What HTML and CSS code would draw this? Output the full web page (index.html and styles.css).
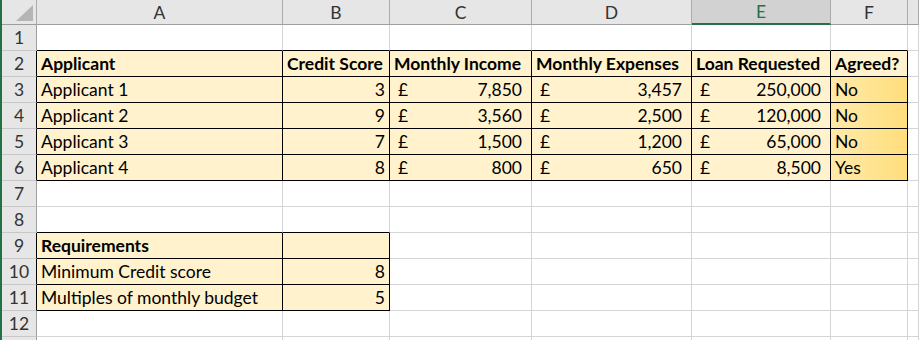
FILE: index.html
```html
<!DOCTYPE html>
<html>
<head>
<meta charset="utf-8">
<link rel="stylesheet" href="styles.css">
</head>
<body>
<div class="sheet">
  <div class="corner"><svg width="18" height="17" viewBox="0 0 18 17"><polygon points="17,0 17,16 0,16" fill="#b5b5b5"/></svg></div>
  <div class="ch">A</div><div class="ch">B</div><div class="ch">C</div><div class="ch">D</div><div class="ch sel">E</div><div class="ch">F</div><div class="ch"></div>

  <div class="rh">1</div>
  <div class="c tb"></div><div class="c tb"></div><div class="c tb"></div><div class="c tb"></div><div class="c tb"></div><div class="c tb"></div><div class="c"></div>

  <div class="rh lb">2</div>
  <div class="c b f bold">Applicant</div><div class="c b f bold">Credit Score</div><div class="c b f bold">Monthly Income</div><div class="c b f bold">Monthly Expenses</div><div class="c b f bold">Loan Requested</div><div class="c b f bold">Agreed?</div><div class="c"></div>

  <div class="rh lb">3</div>
  <div class="c b f">Applicant 1</div><div class="c b f num">3</div><div class="c b f cur"><span>£</span><span>7,850</span></div><div class="c b f cur"><span>£</span><span>3,457</span></div><div class="c b f cur"><span>£</span><span>250,000</span></div><div class="c b g">No</div><div class="c"></div>

  <div class="rh lb">4</div>
  <div class="c b f">Applicant 2</div><div class="c b f num">9</div><div class="c b f cur"><span>£</span><span>3,560</span></div><div class="c b f cur"><span>£</span><span>2,500</span></div><div class="c b f cur"><span>£</span><span>120,000</span></div><div class="c b g">No</div><div class="c"></div>

  <div class="rh lb">5</div>
  <div class="c b f">Applicant 3</div><div class="c b f num">7</div><div class="c b f cur"><span>£</span><span>1,500</span></div><div class="c b f cur"><span>£</span><span>1,200</span></div><div class="c b f cur"><span>£</span><span>65,000</span></div><div class="c b g">No</div><div class="c"></div>

  <div class="rh lb">6</div>
  <div class="c b f">Applicant 4</div><div class="c b f num">8</div><div class="c b f cur"><span>£</span><span>800</span></div><div class="c b f cur"><span>£</span><span>650</span></div><div class="c b f cur"><span>£</span><span>8,500</span></div><div class="c b g">Yes</div><div class="c"></div>

  <div class="rh">7</div>
  <div class="c"></div><div class="c"></div><div class="c"></div><div class="c"></div><div class="c"></div><div class="c"></div><div class="c"></div>

  <div class="rh">8</div>
  <div class="c tb"></div><div class="c tb"></div><div class="c"></div><div class="c"></div><div class="c"></div><div class="c"></div><div class="c"></div>

  <div class="rh lb">9</div>
  <div class="c b f bold">Requirements</div><div class="c b f"></div><div class="c"></div><div class="c"></div><div class="c"></div><div class="c"></div><div class="c"></div>

  <div class="rh lb">10</div>
  <div class="c b f">Minimum Credit score</div><div class="c b f num">8</div><div class="c"></div><div class="c"></div><div class="c"></div><div class="c"></div><div class="c"></div>

  <div class="rh lb">11</div>
  <div class="c b f">Multiples of monthly budget</div><div class="c b f num">5</div><div class="c"></div><div class="c"></div><div class="c"></div><div class="c"></div><div class="c"></div>

  <div class="rh">12</div>
  <div class="c"></div><div class="c"></div><div class="c"></div><div class="c"></div><div class="c"></div><div class="c"></div><div class="c"></div>

  <div class="rh"></div>
  <div class="c"></div><div class="c"></div><div class="c"></div><div class="c"></div><div class="c"></div><div class="c"></div><div class="c"></div>
</div>
</body>
</html>
```

FILE: styles.css
```css
html, body {
  margin: 0;
  padding: 0;
  background: #ffffff;
  overflow: hidden;
  height: 340px;
}
.sheet {
  display: grid;
  grid-template-columns: 35px 246px 107px 142px 160px 139px 77px 1fr;
  grid-template-rows: 25px;
  grid-auto-rows: 26px;
  border-left: 2px solid #217346;
  width: 917px;
  height: 340px;
  overflow: hidden;
  font-family: Lato, "Liberation Sans", sans-serif;
  font-size: 17.5px;
  color: #000;
}
.sheet > div {
  box-sizing: border-box;
  border-right: 1px solid #d4d4d4;
  border-bottom: 1px solid #d4d4d4;
  white-space: nowrap;
  overflow: hidden;
}
.corner {
  background: #e6e6e6;
  display: flex;
  align-items: flex-end;
  justify-content: flex-end;
  padding: 0 2px 2px 0;
  border-right-color: #ababab !important;
  border-bottom-color: #9e9e9e !important;
}
.corner svg { display: block; }
.ch {
  background: #e6e6e6;
  color: #333;
  display: flex;
  align-items: center;
  justify-content: center;
  border-right-color: #ababab !important;
  border-bottom-color: #9e9e9e !important;
}
.ch.sel {
  background: #d2d2d2;
  color: #217346;
  border-bottom: 2px solid #217346 !important;
}
.rh {
  background: #e6e6e6;
  color: #333;
  display: flex;
  align-items: flex-end;
  justify-content: center;
  padding-bottom: 2px;
  border-right-color: #9e9e9e !important;
  border-bottom-color: #c8c8c8 !important;
}
.rh.lb { border-right-color: #000 !important; }
.c {
  display: flex;
  align-items: flex-end;
  padding: 0 4px 2px 4px;
}
.c.tb { border-bottom-color: #000; }
.c.b { border-right-color: #000; border-bottom-color: #000; }
.f { background: #fff2cc; }
.g { background: linear-gradient(to right, #ffeaab, #ffde7c); }
.bold { font-weight: 700; }
.num { justify-content: flex-end; }
.cur { justify-content: space-between; padding-left: 8px; padding-right: 9px; }
```
